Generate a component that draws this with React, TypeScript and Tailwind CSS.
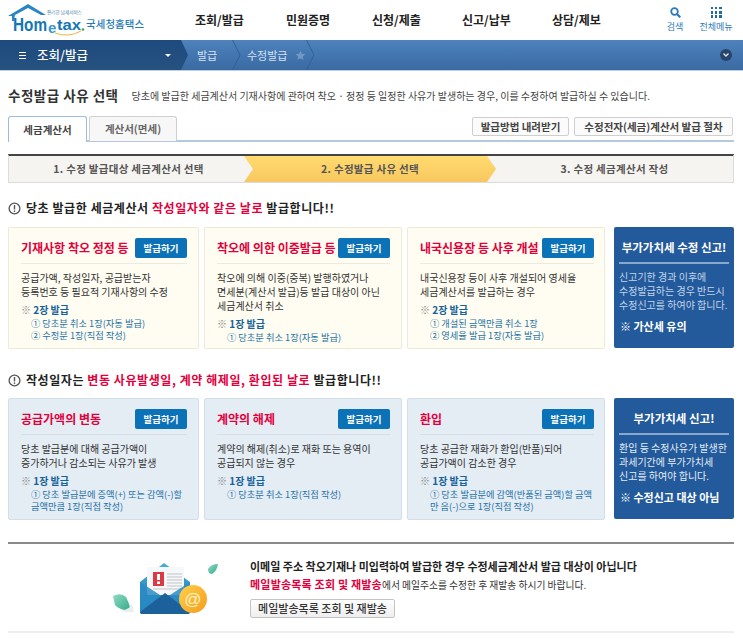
import React from "react";

const R = ({ children }: { children: React.ReactNode }) => <span className="text-[#e2003c]">{children}</span>;

function Logo() {
  return (
    <svg width="150" height="40" viewBox="0 0 150 40" className="shrink-0">
      <path d="M8 16 L28 4 L46 15 L41 15 L28 8 L15 15 L14 21 L12 21 L12 16 Z" fill="#2a86c4" />
      <text x="13" y="31" fontFamily="'Liberation Sans',sans-serif" fontWeight="700" fontSize="18.5" fill="#1376b5" textLength="34" lengthAdjust="spacingAndGlyphs">Hom</text>
      <text x="48" y="33" fontFamily="'Liberation Sans',sans-serif" fontWeight="700" fontSize="15" fill="#3c97cf">e</text>
      <text x="57" y="30" fontFamily="'Liberation Sans',sans-serif" fontWeight="700" fontSize="15.5" fill="#1376b5" textLength="24" lengthAdjust="spacingAndGlyphs">tax</text>
      <circle cx="83" cy="29.5" r="1.3" fill="#49a83c" />
      <path d="M55 33 Q68 38 81 31" fill="none" stroke="#f0b23c" strokeWidth="1" />
      <text x="47" y="14" fontFamily="'Noto Sans CJK KR',sans-serif" fontSize="4.6" fill="#4a7fa8">편리한 납세서비스</text>
      <text x="86" y="28" fontFamily="'Noto Sans CJK KR',sans-serif" fontWeight="500" fontSize="10.4" fill="#1f7cb8" textLength="58">국세청홈택스</text>
    </svg>
  );
}

function Chevron() {
  return (
    <svg width="9" height="30" viewBox="0 0 9 30" className="shrink-0">
      <path d="M0.5 0 L8 15 L0.5 30" fill="none" stroke="#2f5f96" strokeWidth="1" />
    </svg>
  );
}

function Header() {
  const nav = [
    ["조회/발급", "ml-[45px] w-[91px]"],
    ["민원증명", "w-[86px]"],
    ["신청/제출", "w-[90px]"],
    ["신고/납부", "w-[90px]"],
    ["상담/제보", "w-[62px]"],
  ];
  return (
    <div className="flex h-10 items-center bg-white">
      <Logo />
      {nav.map(([t, c]) => (
        <div key={t} className={`${c} shrink-0 text-[12px] font-bold text-[#222]`}>{t}</div>
      ))}
      <div className="ml-[52px] flex w-[18px] shrink-0 flex-col items-center gap-[3.5px] text-[#2a7bb8]">
        <svg width="11" height="11" viewBox="0 0 11 11">
          <circle cx="4.5" cy="4.5" r="3.3" fill="none" stroke="#2a7bb8" strokeWidth="1.8" />
          <path d="M7 7 L10.3 10.3" stroke="#2a7bb8" strokeWidth="2.2" />
        </svg>
        <span className="whitespace-nowrap text-[9px] leading-[12px]">검색</span>
      </div>
      <div className="ml-[14px] flex w-[36px] shrink-0 flex-col items-center gap-[3.5px] text-[#2a7bb8]">
        <div className="grid h-[11px] w-[11px] grid-cols-3 gap-[1.5px]">
          {Array.from({ length: 9 }).map((_, i) => (
            <span key={i} className="bg-[#1f6aa8]" />
          ))}
        </div>
        <span className="whitespace-nowrap text-[9px] leading-[12px]">전체메뉴</span>
      </div>
    </div>
  );
}

function Bar() {
  return (
    <div className="flex h-[31px] items-stretch border-b border-[#bfd0e6] bg-gradient-to-b from-[#4d82bc] to-[#3a6aa2]">
      <div className="flex w-[188px] shrink-0 items-center bg-gradient-to-b from-[#1e4a7e] to-[#25527f] pl-[19px] [clip-path:polygon(0_0,181px_0,100%_50%,181px_100%,0_100%)]">
        <div className="flex h-[7px] w-[7px] flex-col justify-between">
          <span className="h-px bg-white" /><span className="h-px bg-white" /><span className="h-px bg-white" />
        </div>
        <span className="ml-[11px] text-[12.5px] font-medium text-white">조회/발급</span>
        <span className="ml-[77px] h-0 w-0 border-x-[3px] border-t-[3px] border-x-transparent border-t-white" />
      </div>
      <span className="ml-[9px] w-[35px] self-center text-[11px] text-[#d5e2f1]">발급</span>
      <Chevron />
      <span className="ml-[6px] w-[48px] self-center whitespace-nowrap text-[11px] text-[#d5e2f1]">수정발급</span>
      <svg width="11" height="11" viewBox="0 0 24 24" className="shrink-0 self-center">
        <path d="M12 1.5l3.2 6.9 7.3.9-5.4 5.1 1.4 7.5L12 17.9 5.5 21.5l1.4-7.5L1.5 9.3l7.3-.9z" fill="#7298c4" />
      </svg>
      <Chevron />
      <div className="ml-auto mr-[11px] flex h-[12px] w-[12px] items-center justify-center self-center rounded-full bg-[#27446a]">
        <svg width="8" height="8" viewBox="0 0 8 8"><path d="M1.5 2.5 L4 5 L6.5 2.5" fill="none" stroke="#dfe8f2" strokeWidth="1.4" /></svg>
      </div>
    </div>
  );
}

function Tabs() {
  return (
    <div className="mt-[5px] flex h-[26px] items-start border-b-2 border-[#b4c8e0]">
      <div className="relative z-10 flex h-[26px] w-[79px] items-center justify-center rounded-t-[3px] border border-b-0 border-[#9cbcdd] bg-white text-[10.5px] font-bold text-[#444]">세금계산서</div>
      <div className="ml-[2px] flex h-[25px] w-[88px] items-center justify-center rounded-t-[3px] border border-b-0 border-[#cfcfcf] bg-[#f7f7f7] text-[10.5px] font-bold text-[#666]">계산서(면세)</div>
      <button className="ml-auto mt-[1px] h-[19px] w-[97px] rounded-[2px] border border-[#cfcfcf] bg-[#fbfbfb] text-[10.5px] font-bold text-[#444]">발급방법 내려받기</button>
      <button className="ml-[5px] mr-px mt-[1px] h-[19px] w-[159px] whitespace-nowrap rounded-[2px] border border-[#cfcfcf] bg-[#fbfbfb] text-[10.5px] font-bold text-[#444]">수정전자(세금)계산서 발급 절차</button>
    </div>
  );
}

function Steps() {
  return (
    <div className="mt-3 flex h-[29px] border border-t-2 border-[#dcdcdc] border-t-[#444] bg-[#f5f4f0] text-[10.5px] font-bold tracking-[0.3px] text-[#555]">
      <div className="flex w-[235px] shrink-0 items-center justify-center pl-[4px]">1. 수정 발급대상 세금계산서 선택</div>
      <div className="flex w-[252px] shrink-0 items-center justify-center bg-gradient-to-b from-[#ffdb70] to-[#f8c75f] [clip-path:polygon(0_0,243px_0,100%_50%,243px_100%,0_100%,9px_50%)]">2. 수정발급 사유 선택</div>
      <div className="flex flex-1 items-center justify-center">3. 수정 세금계산서 작성</div>
    </div>
  );
}

function AlertHead({ children, mt }: { children: React.ReactNode; mt: string }) {
  return (
    <div className={`${mt} flex h-[16px] items-center gap-[5px] text-[12px] font-bold tracking-[0.57px] text-[#222]`}>
      <svg width="13" height="13" viewBox="0 0 13 13" className="shrink-0">
        <circle cx="6.5" cy="6.5" r="5.4" fill="none" stroke="#555" strokeWidth="1.3" />
        <rect x="5.8" y="3" width="1.4" height="4.4" fill="#555" />
        <rect x="5.8" y="8.4" width="1.4" height="1.5" fill="#555" />
      </svg>
      <div className="whitespace-nowrap">{children}</div>
    </div>
  );
}

type CardP = {
  w: string; pr: string; title: string; text: string[]; head: string; subs: React.ReactNode[]; tone: "y" | "b";
};

function Card({ w, pr, title, text, head, subs, tone }: CardP) {
  const toneC = tone === "y" ? "border-[#eeead8] bg-[#fffdf1]" : "border-[#d2dfeb] bg-[#e4ecf4]";
  const line = tone === "y" ? "border-[#ebe9e0]" : "border-[#d5dfe9]";
  return (
    <div className={`${w} ${pr} h-[122px] shrink-0 rounded-[2px] border ${toneC} pl-[12px] pt-[10px]`}>
      <div className="flex h-[20px] items-center justify-between">
        <span className="whitespace-nowrap text-[12px] font-bold text-[#e2003c]">{title}</span>
        <button className="h-[20px] w-[52px] shrink-0 rounded-[2px] bg-[#0b72b8] text-[9.5px] font-bold text-white">발급하기</button>
      </div>
      <div className={`mt-[5px] border-b ${line}`} />
      <div className="mt-[7px] text-[10px] leading-[14px] text-[#333]">
        {text.map((t) => <div key={t} className="whitespace-nowrap">{t}</div>)}
      </div>
      <div className="mt-[4px] text-[10px] leading-[14px] font-bold text-[#16629a]"><span className="font-normal text-[#888]">※ </span>{head}</div>
      <div className="pl-[10px] text-[9.25px] leading-[12px] text-[#2472a8]">
        {subs.map((s, i) => <div key={i} className="whitespace-nowrap">{s}</div>)}
      </div>
    </div>
  );
}

function DarkCard({ title, text, note, tone }: { title: string; text: string[]; note: string; tone: string }) {
  return (
    <div className="h-[121px] w-[120px] shrink-0 rounded-[2px] bg-[#235a9b] px-[5px] pt-[11px]">
      <div className="flex h-[20px] items-center justify-center whitespace-nowrap text-[11.5px] font-bold text-white">{title}</div>
      <div className="mt-[4px] border-b-2 border-[#8aa8cc]" />
      <div className={`mt-[6px] text-[10px] leading-[14px] ${tone}`}>
        {text.map((t) => <div key={t} className="whitespace-nowrap">{t}</div>)}
      </div>
      <div className="mt-[7px] pl-px text-[11px] leading-[14px] font-bold text-white">※ {note}</div>
    </div>
  );
}

function Mail() {
  return (
    <svg width="106" height="60" viewBox="0 0 106 60" className="mt-[3px] shrink-0">
      <defs>
        <linearGradient id="env" x1="0" y1="0" x2="0" y2="1">
          <stop offset="0" stopColor="#45b2d6" />
          <stop offset="1" stopColor="#1d6fb0" />
        </linearGradient>
        <linearGradient id="coin" x1="0" y1="0" x2="1" y2="1">
          <stop offset="0" stopColor="#ffd24a" />
          <stop offset="1" stopColor="#f59b1c" />
        </linearGradient>
        <linearGradient id="leaf" x1="0" y1="0" x2="1" y2="1">
          <stop offset="0" stopColor="#8fdcc0" />
          <stop offset="1" stopColor="#35a88c" />
        </linearGradient>
      </defs>
      <path d="M1 35 Q9 31 14 36 Q19 46 18 50 Q7 49 3 44 Z" fill="url(#leaf)" />
      <path d="M8 50 Q16 52 22 51 Q21 45 19 42 Q20 48 8 50Z" fill="#e9eef0" />
      <path d="M96 8 Q99 3 106 3 Q105 10 100 13 Q96 13 96 8Z" fill="url(#leaf)" />
      <path d="M28 21 L52 2 L78 21 L78 50 Q78 53 75 53 L31 53 Q28 53 28 50Z" fill="url(#env)" />
      <rect x="35" y="6" width="37" height="28" rx="1.5" fill="#f6f7f8" />
      <rect x="41" y="11" width="11" height="14" fill="#d93a44" />
      <rect x="45" y="13" width="3" height="6" fill="#fff" />
      <rect x="45" y="20.5" width="3" height="2.5" fill="#fff" />
      <path d="M55 13h15M55 16h15M55 19h15M55 22h15M55 25h15M41 28h29" stroke="#bfc5cb" strokeWidth="1" />
      <path d="M28 21 L48 34 Q53 37 58 34 L78 21 L78 50 Q78 53 75 53 L31 53 Q28 53 28 50Z" fill="#2a8cc4" opacity="0.85" />
      <path d="M28 51 L53 32 L78 51 Q78 53 75 53 L31 53 Q28 53 28 51Z" fill="#1c6199" />
      <circle cx="81" cy="38" r="14" fill="url(#coin)" />
      <text x="81" y="44" textAnchor="middle" fontSize="17" fontFamily="'Liberation Sans',sans-serif" fill="#fff3c8">@</text>
    </svg>
  );
}

export default function App() {
  return (
    <div className="min-h-[638px] w-full overflow-hidden bg-white font-['Noto_Sans_CJK_KR',sans-serif]">
      <Header />
      <Bar />
      <div className="px-2 pr-[9px]">
        <div className="flex h-[40px] items-center pt-[9px] pb-0">
          <span className="whitespace-nowrap text-[13.5px] font-bold tracking-[0.5px] text-[#333]">수정발급 사유 선택</span>
          <span className="ml-[13px] whitespace-nowrap text-[10px] text-[#444]">당초에 발급한 세금계산서 기재사항에 관하여 착오 · 정정 등 일정한 사유가 발생하는 경우, 이를 수정하여 발급하실 수 있습니다.</span>
        </div>
        <Tabs />
        <Steps />
        <AlertHead mt="mt-[17px]">당초 발급한 세금계산서 <R>작성일자와 같은 날로</R> 발급합니다!!</AlertHead>
        <div className="mt-[11px] flex">
          <Card w="w-[191px]" pr="pr-[11px]" tone="y" title="기재사항 착오 정정 등" text={["공급가액, 작성일자, 공급받는자", "등록번호 등 필요적 기재사항의 수정"]} head="2장 발급" subs={["① 당초분 취소 1장(자동 발급)", "② 수정분 1장(직접 작성)"]} />
          <div className="w-[5px] shrink-0" />
          <Card w="w-[198px]" pr="pr-[11px]" tone="y" title="착오에 의한 이중발급 등" text={["착오에 의해 이중(중복) 발행하였거나", "면세분(계산서 발급)등 발급 대상이 아닌", "세금계산서 취소"]} head="1장 발급" subs={["① 당초분 취소 1장(자동 발급)"]} />
          <div className="w-[5px] shrink-0" />
          <Card w="w-[198px]" pr="pr-[10px]" tone="y" title="내국신용장 등 사후 개설" text={["내국신용장 등이 사후 개설되어 영세율", "세금계산서를 발급하는 경우"]} head="2장 발급" subs={["① 개설된 금액만큼 취소 1장", "② 영세율 발급 1장(자동 발급)"]} />
          <div className="ml-[9px] flex-1">
            <DarkCard tone="text-[#c3d5ea]" title="부가가치세 수정 신고!" text={["신고기한 경과 이후에", "수정발급하는 경우 반드시", "수정신고를 하여야 합니다."]} note="가산세 유의" />
          </div>
        </div>
        <AlertHead mt="mt-[23px]">작성일자는 <R>변동 사유발생일, 계약 해제일, 환입된 날로</R> 발급합니다!!</AlertHead>
        <div className="mt-[10px] flex">
          <Card w="w-[191px]" pr="pr-[11px]" tone="b" title="공급가액의 변동" text={["당초 발급분에 대해 공급가액이", "증가하거나 감소되는 사유가 발생"]} head="1장 발급" subs={["① 당초 발급분에 증액(+) 또는 감액(-)할", "금액만큼 1장(직접 작성)"]} />
          <div className="w-[5px] shrink-0" />
          <Card w="w-[198px]" pr="pr-[11px]" tone="b" title="계약의 해제" text={["계약의 해제(취소)로 재화 또는 용역이", "공급되지 않는 경우"]} head="1장 발급" subs={["① 당초분 취소 1장(직접 작성)"]} />
          <div className="w-[5px] shrink-0" />
          <Card w="w-[198px]" pr="pr-[10px]" tone="b" title="환입" text={["당초 공급한 재화가 환입(반품)되어", "공급가액이 감소한 경우"]} head="1장 발급" subs={["① 당초 발급분에 감액(반품된 금액)할 금액", "만 음(-)으로 1장(직접 작성)"]} />
          <div className="ml-[9px] flex-1">
            <DarkCard tone="text-[#e4edf7]" title="부가가치세 신고!" text={["환입 등 수정사유가 발생한", "과세기간에 부가가치세", "신고를 하여야 합니다."]} note="수정신고 대상 아님" />
          </div>
        </div>
        <div className="mt-[22px] flex h-[91px] items-start border-y-2 border-t-[#8a8a8a] border-b-[#eeeeee] pl-[104px] pt-[14px]">
          <Mail />
          <div className="ml-[32px] pt-px">
            <div className="text-[11px] leading-[14px] font-bold whitespace-nowrap text-[#222]">이메일 주소 착오기재나 미입력하여 발급한 경우 수정세금계산서 발급 대상이 아닙니다</div>
            <div className="mt-[4px] text-[9.75px] leading-[14px] whitespace-nowrap text-[#333]"><span className="text-[11px] font-bold tracking-[0.2px] text-[#e2003c]">메일발송목록 조회 및 재발송</span>에서 메일주소를 수정한 후 재발송 하시기 바랍니다.</div>
            <button className="mt-[7px] h-[19px] w-[145px] rounded-[2px] border border-[#c4c4c4] bg-gradient-to-b from-white to-[#eeeeee] text-[11px] font-medium text-[#333]">메일발송목록 조회 및 재발송</button>
          </div>
        </div>
      </div>
    </div>
  );
}
